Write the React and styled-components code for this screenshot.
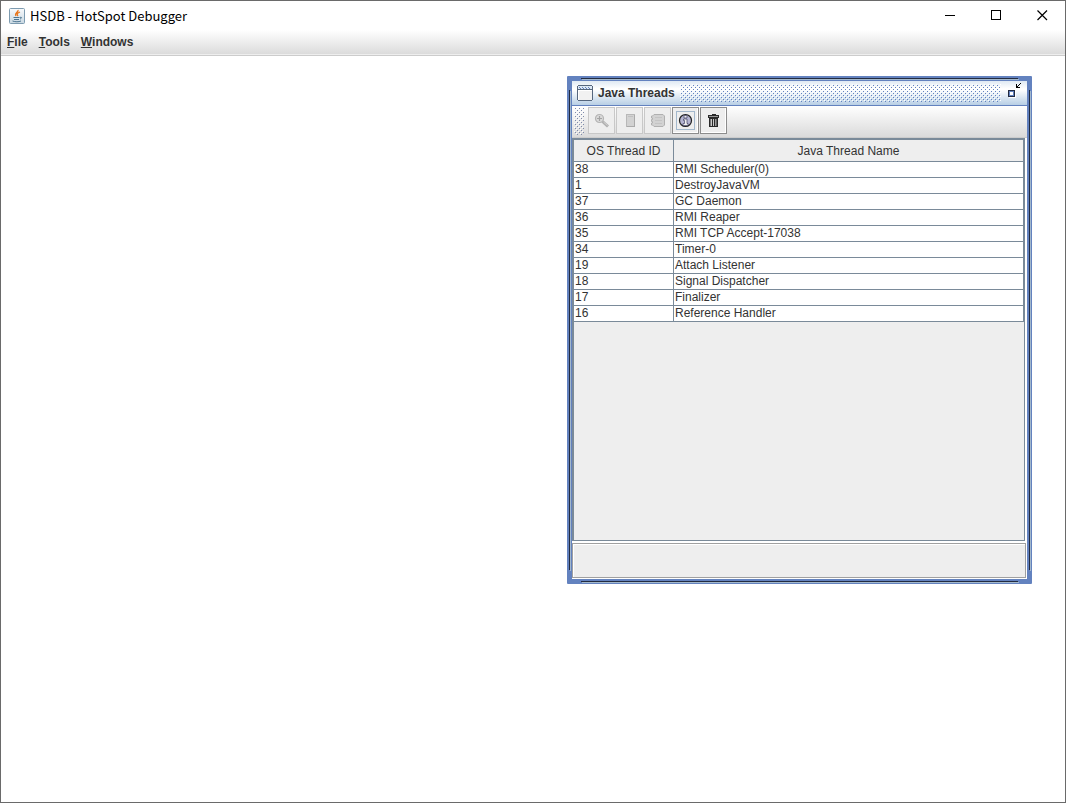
import React from "react";
import styled, { createGlobalStyle, css } from "styled-components";

const Global = createGlobalStyle`
  * { box-sizing: border-box; }
  body { margin: 0; background: #fff; }
`;

const blue = "#6382bf";
const steel = "#7a8a99";

const AppWindow = styled.div`
  display: flex;
  flex-direction: column;
  min-height: 100vh;
  border: 1px solid #6a6a6a;
  color: #333;
  font: 12px/16px "Liberation Sans", Arial, sans-serif;
`;

const TitleBar = styled.header`
  display: flex;
  align-items: center;
  height: 29px;
  padding-left: 8px;
  gap: 5px;
  background: #fff;
`;

const WindowTitle = styled.h1`
  flex: 1;
  margin: 0;
  color: #000;
  font: 13px/16px "Noto Sans CJK SC", "Noto Sans", sans-serif;
`;

const CaptionButton = styled.button`
  display: flex;
  align-items: center;
  justify-content: center;
  width: 46px;
  height: 28px;
  padding: 0;
  border: 0;
  background: none;
  & + & { margin-left: -5px; }
`;

const MenuBar = styled.nav`
  display: flex;
  gap: 11px;
  height: 26px;
  padding: 4px 6px 5px;
  background: linear-gradient(#fff, #dadada);
  border-bottom: 1px solid #ccc;
  box-shadow: inset 0 -1px #eee;
`;

const MenuButton = styled.button`
  padding: 0;
  border: 0;
  background: none;
  color: #333;
  font: bold 12px/16px "Liberation Sans", Arial, sans-serif;
  &::first-letter { text-decoration: underline; }
`;

const Desktop = styled.main`
  position: relative;
  flex: 1;
  background: #fff;
`;

const InternalFrame = styled.section`
  position: absolute;
  top: 20px;
  left: 566px;
  display: flex;
  flex-direction: column;
  width: 465px;
  height: 508px;
  padding: 5px;
  background: ${blue};
  border-radius: 1px;
`;

const EdgeLine = styled.span`
  position: absolute;
  background: #222b40;
  box-shadow: 1px 1px #a3b8cc;
  ${({ $side }) =>
    $side === "top" || $side === "bottom"
      ? css`
          left: 14px;
          right: 14px;
          height: 1px;
          ${$side}: 2px;
        `
      : css`
          top: 14px;
          bottom: 14px;
          width: 1px;
          ${$side}: 2px;
        `}
`;

const FrameTitle = styled.div`
  display: flex;
  align-items: center;
  height: 25px;
  padding: 0 5px;
  gap: 5px;
  background: linear-gradient(#dfe9f3, #fff 32%, #fff 36%, #b8cfe5);
  border-bottom: 1px solid ${blue};
`;

const FrameName = styled.h2`
  margin: 0;
  color: #333;
  font: bold 12px/16px "Liberation Sans", Arial, sans-serif;
`;

const BumpArea = styled.svg`
  display: block;
  height: ${({ $h }) => $h}px;
  ${({ $grow }) => ($grow ? "flex: 1; min-width: 0;" : "width: 10px;")}
`;

const FrameButton = styled.button`
  display: flex;
  padding: 0;
  border: 0;
  background: none;
`;

const FrameBody = styled.div`
  flex: 1;
  display: flex;
  flex-direction: column;
  min-height: 0;
  background: #fff;
`;

const ToolBar = styled.div`
  display: flex;
  align-items: center;
  gap: 1px;
  height: 32px;
  padding: 0 2px 2px;
  background: linear-gradient(#fff, #dadada);
  border-bottom: 1px solid #ccc;
`;

const Grip = styled.div`
  width: 13px;
  display: flex;
`;

const ToolButton = styled.button`
  display: flex;
  align-items: center;
  justify-content: center;
  width: 27px;
  height: 27px;
  padding: 0;
  background: #eee;
  border: 1px solid #8c8c8c;
  box-shadow: inset -1px -1px #fff;
  &:disabled { border-color: #c8c8c8; box-shadow: none; }
`;

const ScrollPane = styled.div`
  flex: 1;
  margin: 0 2px 2px 0;
  background: #eee;
  border: 1px solid ${steel};
  border-left-width: 2px;
  border-top-width: 2px;
`;

const Table = styled.table`
  width: 100%;
  table-layout: fixed;
  border-collapse: separate;
  border-spacing: 0;
`;

const HeadCell = styled.th`
  width: ${({ $w }) => $w || "auto"};
  height: 22px;
  padding: 0;
  background: #eee;
  border: solid ${steel};
  border-width: 0 1px 1px 0;
  font-weight: normal;
  line-height: 20px;
  text-align: center;
`;

const Cell = styled.td`
  height: 16px;
  padding: 0 1px;
  background: #fff;
  border: solid ${steel};
  border-width: 0 1px 1px 0;
  line-height: 15px;
`;

const StatusPanel = styled.footer`
  height: 35px;
  margin: 0 1px 1px 0;
  background: #eee;
  border: 1px solid #a0a0a0;
  box-shadow: inset 1px 1px #fff;
`;

const Java = () => (
  <svg width="16" height="16" viewBox="0 0 16 16" aria-hidden="true">
    <defs>
      <linearGradient id="jbg" x1="0" y1="0" x2="0" y2="1">
        <stop offset="0" stopColor="#f8fafc" />
        <stop offset="1" stopColor="#c9d8e2" />
      </linearGradient>
    </defs>
    <rect x=".5" y=".5" width="15" height="15" rx="1" fill="url(#jbg)" stroke="#7d9bb0" />
    <path d="M9 2c1 2-4 3-2 6M11 4C8 5 7.500 6 9 8" fill="none" stroke="#e8751a" strokeWidth="1.300" />
    <path d="M4.500 9.500h6M5 11.500h5M3.500 13c3 1 6 1 8.500 0M11 9.500c2-1 2 1 0 1.500" fill="none" stroke="#4d7591" />
  </svg>
);

const Pattern = ({ id, color, h, grow }) => (
  <BumpArea $h={h} $grow={grow} aria-hidden="true" shapeRendering="crispEdges">
    <defs>
      <pattern id={id} width="4" height="4" patternUnits="userSpaceOnUse">
        <path d="M0 0h1v1H0zM2 2h1v1H2z" fill="#fff" />
        <path d="M1 1h1v1H1zM3 3h1v1H3z" fill={color} />
      </pattern>
    </defs>
    <rect width="100%" height="100%" fill={`url(#${id})`} />
  </BumpArea>
);

const Magnifier = () => (
  <svg width="16" height="16" viewBox="0 0 16 16" aria-hidden="true">
    <circle cx="5.500" cy="5.500" r="4" fill="#dadada" stroke="#b4b4b4" strokeWidth="1.200" />
    <path d="M5.500 3v5M3 5.500h5" stroke="#a4a4a4" strokeWidth="1.200" />
    <path d="M8.500 8.500l5.500 5" stroke="#b0b0b0" strokeWidth="3" />
    <path d="M9.500 9l4 3.500" stroke="#d0d0d0" />
  </svg>
);

const Page = () => (
  <svg width="16" height="16" viewBox="0 0 16 16" aria-hidden="true">
    <rect x="4.500" y="1.500" width="8" height="12" fill="#d2d2d2" stroke="#b8b8b8" />
    <path d="M6 3.500h5" stroke="#c0c0c0" />
    <path d="M12.500 2v12M5 13.500h8" stroke="#aaa" />
  </svg>
);

const Scroll = () => (
  <svg width="16" height="16" viewBox="0 0 16 16" aria-hidden="true">
    <path d="M4 1.500h9l1.500 1.500v9L13 13.500H4L2.500 12H1.500v-2h1V8.500h-1v-2h1V5h-1V3h1z" fill="#d2d2d2" stroke="#b0b0b0" />
    <path d="M5 4.500h7M5 7.500h7M5 10.500h7" stroke="#c4c4c4" />
  </svg>
);

const Info = () => (
  <svg width="19" height="19" viewBox="0 0 19 19" aria-hidden="true">
    <rect x=".5" y=".5" width="18" height="18" fill="none" stroke="#a3b8cc" />
    <circle cx="9.500" cy="9.500" r="6" fill="#b4b4d2" stroke="#222" strokeWidth="1.200" />
    <path d="M8 4.500h3v2.500H8zM7.500 8h3.500v4.500h1v2H7v-2h1.500V9.500h-1z" fill="#eee" stroke="#444466" strokeWidth=".7" />
  </svg>
);

const Trash = () => (
  <svg width="16" height="16" viewBox="0 0 16 16" aria-hidden="true" shapeRendering="crispEdges">
    <path d="M6 1h4v1h3v3H2V2h4z" fill="#2a2a2a" />
    <path d="M3 3h9v1H3z" fill="#999" />
    <path d="M3 5h9v9H3z" fill="#2a2a2a" />
    <path d="M4 6h1v7H4z" fill="#777" />
    <path d="M5 6h1v7H5zM7 6h1v7H7z" fill="#ccc" />
    <path d="M9 6h1v7H9z" fill="#999" />
    <path d="M10 6h1v7h-1z" fill="#666" />
  </svg>
);

const FrameIcon = () => (
  <svg width="16" height="16" viewBox="0 0 16 16" aria-hidden="true" shapeRendering="crispEdges">
    <path d="M1 0h14v1h1v14h-1v1H1v-1H0V1h1z" fill="#55667d" />
    <rect x="1" y="1" width="14" height="3" fill="#dce8f4" />
    <path d="M2 2h1v1H2zM5 2h1v1H5zM8 2h1v1H8zM11 2h1v1h-1zM3 3h1v1H3zM6 3h1v1H6zM9 3h1v1H9zM12 3h1v1h-1z" fill={blue} />
    <rect x="1" y="5" width="14" height="10" fill="#fff" />
    <rect x="2" y="6" width="13" height="9" fill="#f1f1f1" />
  </svg>
);

const Restore = () => (
  <svg width="16" height="20" viewBox="0 0 16 20" aria-hidden="true" shapeRendering="crispEdges">
    <path d="M3 8h7v7H3z" fill="#fff" />
    <path d="M2 7h7v7H2z" fill="#222b40" />
    <path d="M3 8h5v5H3z" fill={blue} />
    <path d="M4 9h3v3H4z" fill="#fff" />
    <path d="M10 1h1v3h3v1h-4zM11 3h1v1h-1zM12 2h1v1h-1zM13 1h1v1h-1zM14 0h1v1h-1z" fill="#000" />
  </svg>
);

const threads = [
  [38, "RMI Scheduler(0)"],
  [1, "DestroyJavaVM"],
  [37, "GC Daemon"],
  [36, "RMI Reaper"],
  [35, "RMI TCP Accept-17038"],
  [34, "Timer-0"],
  [19, "Attach Listener"],
  [18, "Signal Dispatcher"],
  [17, "Finalizer"],
  [16, "Reference Handler"],
];

export default function App() {
  return (
    <>
      <Global />
      <AppWindow>
        <TitleBar>
          <Java />
          <WindowTitle>HSDB - HotSpot Debugger</WindowTitle>
          <CaptionButton aria-label="Minimize">
            <svg width="11" height="11"><path d="M0 5.500h10" stroke="#000" /></svg>
          </CaptionButton>
          <CaptionButton aria-label="Maximize">
            <svg width="11" height="11"><rect x=".5" y=".5" width="9" height="9" fill="none" stroke="#000" /></svg>
          </CaptionButton>
          <CaptionButton aria-label="Close">
            <svg width="11" height="11"><path d="M.5 .5l9.500 9.500M10 .5l-9.500 9.500" stroke="#000" strokeWidth="1.200" /></svg>
          </CaptionButton>
        </TitleBar>
        <MenuBar>
          {["File", "Tools", "Windows"].map((name) => (
            <MenuButton key={name}>{name}</MenuButton>
          ))}
        </MenuBar>
        <Desktop>
          <InternalFrame aria-label="Java Threads">
            {["top", "right", "bottom", "left"].map((side) => (
              <EdgeLine key={side} $side={side} />
            ))}
            <FrameTitle>
              <FrameIcon />
              <FrameName>Java Threads</FrameName>
              <Pattern id="title-bumps" color={blue} h={18} grow />
              <FrameButton aria-label="Restore"><Restore /></FrameButton>
            </FrameTitle>
            <FrameBody>
              <ToolBar>
                <Grip><Pattern id="grip-bumps" color="#7f8bab" h={28} /></Grip>
                <ToolButton disabled aria-label="Inspect"><Magnifier /></ToolButton>
                <ToolButton disabled aria-label="Stack memory"><Page /></ToolButton>
                <ToolButton disabled aria-label="Stack trace"><Scroll /></ToolButton>
                <ToolButton aria-label="Thread information"><Info /></ToolButton>
                <ToolButton aria-label="Delete"><Trash /></ToolButton>
              </ToolBar>
              <ScrollPane>
                <Table>
                  <thead>
                    <tr>
                      <HeadCell $w="100px">OS Thread ID</HeadCell>
                      <HeadCell>Java Thread Name</HeadCell>
                    </tr>
                  </thead>
                  <tbody>
                    {threads.map(([id, name]) => (
                      <tr key={id}>
                        <Cell>{id}</Cell>
                        <Cell>{name}</Cell>
                      </tr>
                    ))}
                  </tbody>
                </Table>
              </ScrollPane>
              <StatusPanel />
            </FrameBody>
          </InternalFrame>
        </Desktop>
      </AppWindow>
    </>
  );
}
